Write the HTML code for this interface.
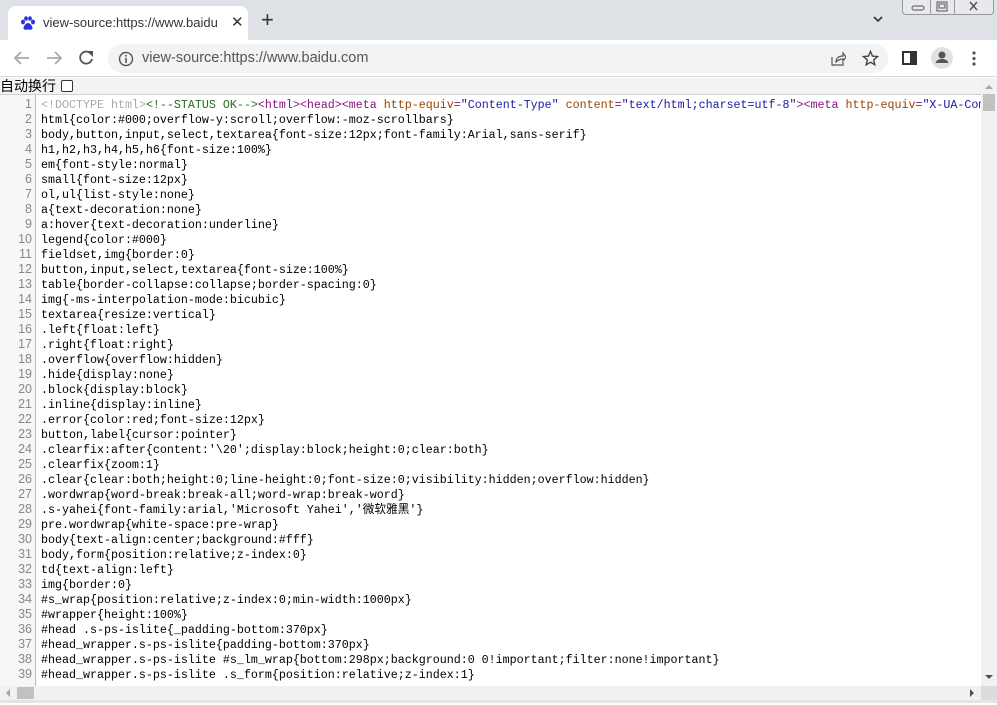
<!DOCTYPE html>
<html><head><meta charset="utf-8"><style>
*{margin:0;padding:0;box-sizing:border-box}
body{width:997px;height:703px;overflow:hidden;background:#fff;font-family:"Liberation Sans","Noto Sans CJK SC",sans-serif;position:relative}
.top{position:absolute;left:0;top:0;width:997px;height:40px;background:#dee1e6}
.tab{position:absolute;left:8px;top:6px;width:240px;height:34px;background:#fff;border-radius:8px 8px 0 0}
.tab .t{position:absolute;left:35px;top:9px;font-size:13px;color:#333;white-space:nowrap;width:175px;overflow:hidden}
.tab .x{position:absolute;left:223px;top:7px;font-size:15px;color:#333}
.plus{position:absolute;left:261px;top:9px;font-size:22px;color:#333;line-height:22px}
.chev{position:absolute;left:873px;top:14px;width:10px;height:10px}
.win{position:absolute;left:902px;top:0;width:92px;height:15px;border:1px solid #999;border-top:none;border-radius:0 0 4px 4px;background:#e8e9ec}
.bar{position:absolute;left:0;top:40px;width:997px;height:37px;background:#fff;border-bottom:1px solid #d9d9d9}
.omni{position:absolute;left:108px;top:4px;width:780px;height:29px;background:#f1f3f4;border-radius:15px}
.omni .u{position:absolute;left:34px;top:6px;font-size:14.5px;color:#555}
.opt{position:absolute;left:0;top:78px;width:997px;height:17px;background:#f3f3f3;font-size:14px;line-height:17px;color:#000;border-bottom:1px solid #d0d0d0}
.cb{display:inline-block;width:12px;height:12px;border:1px solid #333;border-radius:2px;vertical-align:-1px;margin-left:5px;background:#fff}
.code{position:absolute;left:0;top:95px;width:981px;height:591px;overflow:hidden}
.gut{position:absolute;left:0;top:0;width:36px;height:591px;background:#f7f7f7;border-right:1px solid #bbb}
pre{font-family:"Liberation Mono","Noto Sans CJK SC",monospace;font-size:11.67px;line-height:15px;position:absolute;top:3px;white-space:pre}
.nums{left:0;width:32px;text-align:right;color:#888;font-family:"Liberation Sans",sans-serif;font-size:12.5px;top:2px}
.src{left:41px;color:#000}
.d{color:#aaa}.c{color:#236e25}.g{color:#881280}.a{color:#994500}.v{color:#1a1aa6}
.vs{position:absolute;left:981px;top:79px;width:16px;height:607px;background:#f1f1f1}
.hs{position:absolute;left:0;top:686px;width:981px;height:14px;background:#f1f1f1}
.corner{position:absolute;left:981px;top:686px;width:16px;height:14px;background:#dcdcdc}
.bot{position:absolute;left:0;top:700px;width:997px;height:3px;background:#e4e4e4}
</style></head><body>
<div class="top">
 <div class="tab">
  <svg style="position:absolute;left:12px;top:9px" width="16" height="16" viewBox="0 0 16 16"><g fill="#2932e1"><ellipse cx="3" cy="7" rx="2" ry="2.4"/><ellipse cx="6" cy="3.5" rx="1.9" ry="2.3"/><ellipse cx="10" cy="3.5" rx="1.9" ry="2.3"/><ellipse cx="13" cy="7" rx="2" ry="2.4"/><path d="M8 8c-2 0-4.5 3-4.5 5 0 2 2 2 4.5 1.5 2.5.5 4.5.5 4.5-1.5 0-2-2.5-5-4.5-5z"/></g></svg>
  <div class="t">view-source:https://www.baidu</div><div class="x">✕</div>
 </div>
 <div class="plus">+</div>
 <svg class="chev" viewBox="0 0 10 10"><path d="M1 3l4 4 4-4" stroke="#333" stroke-width="1.6" fill="none"/></svg>
 <div class="win"><svg width="92" height="15"><rect x="9" y="6" width="12" height="4" rx="2" fill="none" stroke="#555"/><line x1="27.5" y1="0" x2="27.5" y2="15" stroke="#999"/><rect x="34" y="2" width="10" height="9" fill="none" stroke="#555"/><rect x="36" y="4" width="6" height="4" fill="none" stroke="#555"/><line x1="51.5" y1="0" x2="51.5" y2="15" stroke="#999"/><path d="M67 2l7 8M74 2l-7 8" stroke="#555" stroke-width="1.5"/></svg></div>
</div>
<div class="bar">
 <svg style="position:absolute;left:12px;top:9px" width="20" height="18"><path d="M17 9H4M9 3L3 9l6 6" stroke="#aaa" stroke-width="1.8" fill="none"/></svg>
 <svg style="position:absolute;left:44px;top:9px" width="20" height="18"><path d="M3 9h13M11 3l6 6-6 6" stroke="#aaa" stroke-width="1.8" fill="none"/></svg>
 <svg style="position:absolute;left:77px;top:9px" width="18" height="18"><path d="M14 5A6 6 0 1 0 15 10" stroke="#555" stroke-width="1.8" fill="none"/><path d="M10 2h6v6z" fill="#555"/></svg>
 <div class="omni">
  <svg style="position:absolute;left:10px;top:7px" width="16" height="16"><circle cx="8" cy="8" r="6.5" stroke="#555" stroke-width="1.4" fill="none"/><rect x="7.2" y="7" width="1.6" height="5" fill="#555"/><rect x="7.2" y="4" width="1.6" height="1.6" fill="#555"/></svg>
  <div class="u">view-source:https://www.baidu.com</div>
  <svg style="position:absolute;left:722px;top:7px" width="16" height="16"><path d="M2 6v8h11v-3M6 11c0-4 3-6 7-6V2l3 4-3 4V8c-3 0-5 1-7 3z" stroke="#555" stroke-width="1.2" fill="none"/></svg>
  <svg style="position:absolute;left:754px;top:6px" width="17" height="17"><path d="M8.5 1.5l2 4.6 5 .5-3.8 3.3 1.1 4.9-4.3-2.6-4.3 2.6 1.1-4.9L1.5 6.6l5-.5z" stroke="#444" stroke-width="1.4" fill="none"/></svg>
 </div>
 <svg style="position:absolute;left:902px;top:11px" width="15" height="15"><rect x="1" y="1" width="13" height="12" fill="none" stroke="#333" stroke-width="2"/><rect x="8" y="1" width="6" height="12" fill="#333"/></svg>
 <svg style="position:absolute;left:931px;top:7px" width="22" height="22"><circle cx="11" cy="11" r="11" fill="#dfe1e5"/><circle cx="11" cy="8" r="3.5" fill="#555"/><path d="M4.5 16c1-3 3.5-4 6.5-4s5.5 1 6.5 4z" fill="#555"/></svg>
 <svg style="position:absolute;left:971px;top:11px" width="6" height="16"><circle cx="3" cy="2" r="1.6" fill="#555"/><circle cx="3" cy="7.5" r="1.6" fill="#555"/><circle cx="3" cy="13" r="1.6" fill="#555"/></svg>
</div>
<div class="opt">自动换行<span class="cb"></span></div>
<div class="code">
<div class="gut"></div>
<pre class="nums">1
2
3
4
5
6
7
8
9
10
11
12
13
14
15
16
17
18
19
20
21
22
23
24
25
26
27
28
29
30
31
32
33
34
35
36
37
38
39</pre>
<pre class="src"><span class="d">&lt;!DOCTYPE html&gt;</span><span class="c">&lt;!--STATUS OK--&gt;</span><span class="g">&lt;html&gt;&lt;head&gt;&lt;meta </span><span class="a">http-equiv</span><span class="g">=</span><span class="v">"Content-Type"</span> <span class="a">content</span><span class="g">=</span><span class="v">"text/html;charset=utf-8"</span><span class="g">&gt;&lt;meta </span><span class="a">http-equiv</span><span class="g">=</span><span class="v">"X-UA-Compatible"</span>
html{color:#000;overflow-y:scroll;overflow:-moz-scrollbars}
body,button,input,select,textarea{font-size:12px;font-family:Arial,sans-serif}
h1,h2,h3,h4,h5,h6{font-size:100%}
em{font-style:normal}
small{font-size:12px}
ol,ul{list-style:none}
a{text-decoration:none}
a:hover{text-decoration:underline}
legend{color:#000}
fieldset,img{border:0}
button,input,select,textarea{font-size:100%}
table{border-collapse:collapse;border-spacing:0}
img{-ms-interpolation-mode:bicubic}
textarea{resize:vertical}
.left{float:left}
.right{float:right}
.overflow{overflow:hidden}
.hide{display:none}
.block{display:block}
.inline{display:inline}
.error{color:red;font-size:12px}
button,label{cursor:pointer}
.clearfix:after{content:'\20';display:block;height:0;clear:both}
.clearfix{zoom:1}
.clear{clear:both;height:0;line-height:0;font-size:0;visibility:hidden;overflow:hidden}
.wordwrap{word-break:break-all;word-wrap:break-word}
.s-yahei{font-family:arial,'Microsoft Yahei','微软雅黑'}
pre.wordwrap{white-space:pre-wrap}
body{text-align:center;background:#fff}
body,form{position:relative;z-index:0}
td{text-align:left}
img{border:0}
#s_wrap{position:relative;z-index:0;min-width:1000px}
#wrapper{height:100%}
#head .s-ps-islite{_padding-bottom:370px}
#head_wrapper.s-ps-islite{padding-bottom:370px}
#head_wrapper.s-ps-islite #s_lm_wrap{bottom:298px;background:0 0!important;filter:none!important}
#head_wrapper.s-ps-islite .s_form{position:relative;z-index:1}</pre>
</div>
<div class="vs"><svg width="16" height="607"><path d="M4 10l4-4 4 4z" fill="#a3a3a3"/><rect x="2" y="15" width="12" height="17" fill="#c1c1c1"/><path d="M4 596l4 4 4-4z" fill="#505050"/></svg></div>
<div class="hs"><svg width="981" height="14"><path d="M10 3v8l-4-4z" fill="#a3a3a3"/><rect x="17" y="1" width="17" height="12" fill="#c1c1c1"/><path d="M970 3v8l4-4z" fill="#505050"/></svg></div>
<div class="corner"></div>
<div class="bot"></div>
</body></html>
